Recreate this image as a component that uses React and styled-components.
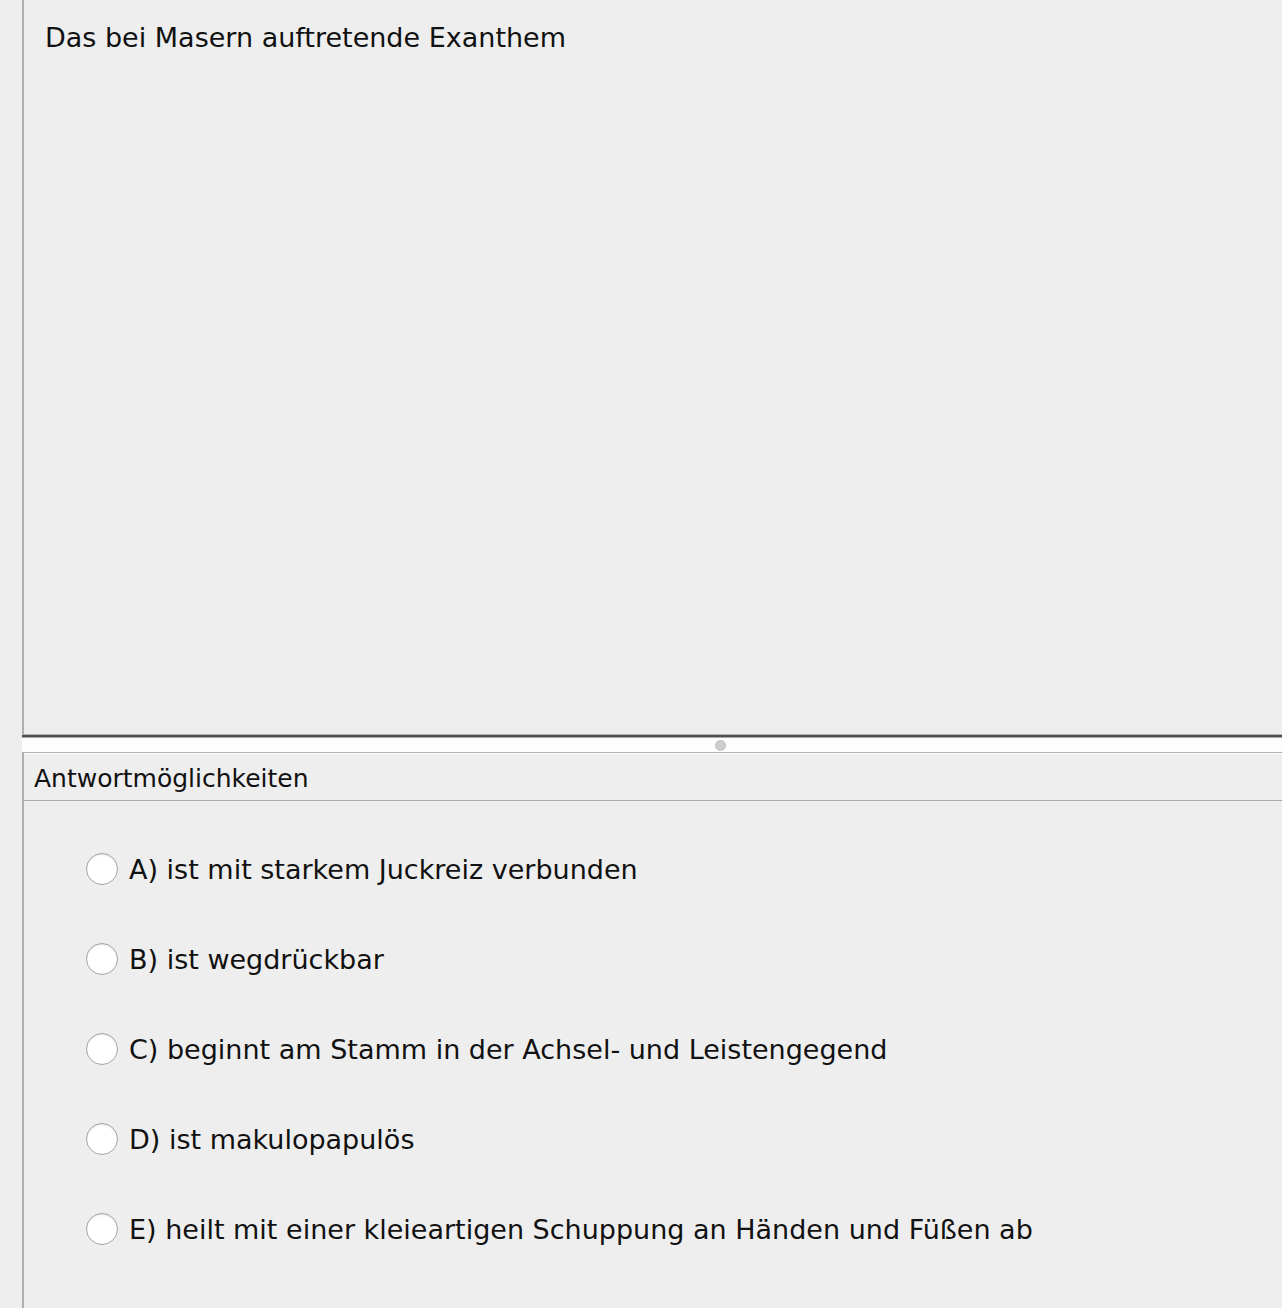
import React from 'react';
import styled, { createGlobalStyle } from 'styled-components';

const GlobalStyle = createGlobalStyle`
  html, body {
    margin: 0;
    padding: 0;
    background: #eeeeee;
  }
  body {
    font-family: "DejaVu Sans", "Liberation Sans", sans-serif;
    color: #111;
  }
`;

const Window = styled.div`
  display: flex;
  width: 1282px;
  height: 1308px;
  overflow: hidden;
  background: #eeeeee;
`;

const Gutter = styled.div`
  width: 22px;
  flex-shrink: 0;
`;

const SplitPane = styled.div`
  flex: 1;
  display: flex;
  flex-direction: column;
`;

const QuestionPanel = styled.div`
  height: 734px;
  border-left: 2px solid #b0b0b0;
  padding: 22px 0 0 21px;
  box-sizing: border-box;
  font-size: 27px;
`;

const Divider = styled.div`
  height: 19px;
  box-sizing: border-box;
  border-top: 1px solid #b4b4b4;
  border-bottom: 1px solid #b0b0b0;
  background: linear-gradient(#505050 0 2px, #a8a8a8 2px 3px, #fdfdfd 3px);
  display: flex;
  align-items: center;
  padding: 3px 0 0 693px;
`;

const Knob = styled.span`
  width: 11px;
  height: 11px;
  border-radius: 50%;
  background: #cdcdcd;
  border: 1px solid #bdbdbd;
  box-sizing: border-box;
`;

const AnswerPanel = styled.div`
  flex: 1;
  border-left: 2px solid #b0b0b0;
  display: flex;
  flex-direction: column;
`;

const Header = styled.div`
  height: 48px;
  box-sizing: border-box;
  border-bottom: 1px solid #ababab;
  box-shadow: inset 1px 3px 0 -2px #ffffff;
  padding: 3px 0 0 10px;
  display: flex;
  align-items: center;
  font-size: 25px;
`;

const OptionList = styled.div`
  display: flex;
  flex-direction: column;
  gap: 58px;
  padding: 52px 0 0 62px;
`;

const Option = styled.label`
  display: flex;
  align-items: center;
  gap: 11px;
  height: 32px;
  font-size: 27px;
  cursor: pointer;
`;

const Radio = styled.span`
  width: 32px;
  height: 32px;
  border-radius: 50%;
  box-sizing: border-box;
  border: 1px solid #a5a5a5;
  background: radial-gradient(circle at 50% 60%, #ffffff 60%, #f2f2f2 100%);
  box-shadow: inset 0 1px 1px rgba(0, 0, 0, 0.08);
  flex-shrink: 0;
`;

const options = [
  'A) ist mit starkem Juckreiz verbunden',
  'B) ist wegdrückbar',
  'C) beginnt am Stamm in der Achsel- und Leistengegend',
  'D) ist makulopapulös',
  'E) heilt mit einer kleieartigen Schuppung an Händen und Füßen ab',
];

const App = () => (
  <Window>
    <GlobalStyle />
    <Gutter />
    <SplitPane>
      <QuestionPanel>Das bei Masern auftretende Exanthem</QuestionPanel>
      <Divider>
        <Knob />
      </Divider>
      <AnswerPanel>
        <Header>Antwortmöglichkeiten</Header>
        <OptionList>
          {options.map((text) => (
            <Option key={text}>
              <Radio />
              {text}
            </Option>
          ))}
        </OptionList>
      </AnswerPanel>
    </SplitPane>
  </Window>
);

export default App;
